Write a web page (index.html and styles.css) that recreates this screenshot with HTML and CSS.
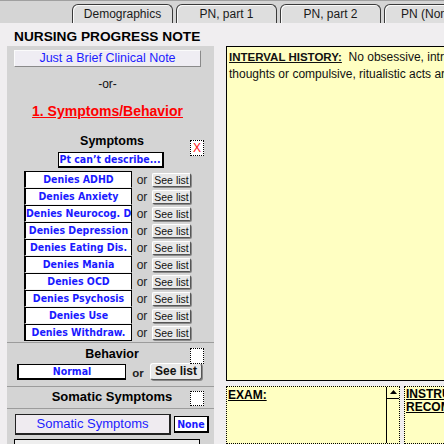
FILE: index.html
```html
<!DOCTYPE html>
<html>
<head>
<meta charset="utf-8">
<link rel="stylesheet" href="styles.css">
</head>
<body>
<div class="topbar">
  <div class="tab">Demographics</div>
  <div class="tab">PN, part 1</div>
  <div class="tab">PN, part 2</div>
  <div class="tab tab-last">PN (Non-Narrative)</div>
</div>
<div class="titlebar">NURSING PROGRESS NOTE</div>
<div class="main">
  <div class="left">
    <div class="brief">Just a Brief Clinical Note</div>
    <div class="or">-or-</div>
    <div class="sec-title">1. Symptoms/Behavior</div>
    <div class="block symptoms">
      <div class="heading">Symptoms</div>
      <div class="xbox">X</div>
      <div class="pt">Pt can’t describe...</div>
      <div class="rows">
        <div class="row"><div class="deny">Denies ADHD</div><span class="or-s">or</span><div class="see">See list</div></div>
        <div class="row"><div class="deny">Denies Anxiety</div><span class="or-s">or</span><div class="see">See list</div></div>
        <div class="row"><div class="deny">Denies Neurocog. Dis</div><span class="or-s">or</span><div class="see">See list</div></div>
        <div class="row"><div class="deny">Denies Depression</div><span class="or-s">or</span><div class="see">See list</div></div>
        <div class="row"><div class="deny">Denies Eating Dis.</div><span class="or-s">or</span><div class="see">See list</div></div>
        <div class="row"><div class="deny">Denies Mania</div><span class="or-s">or</span><div class="see">See list</div></div>
        <div class="row"><div class="deny">Denies OCD</div><span class="or-s">or</span><div class="see">See list</div></div>
        <div class="row"><div class="deny">Denies Psychosis</div><span class="or-s">or</span><div class="see">See list</div></div>
        <div class="row"><div class="deny">Denies Use</div><span class="or-s">or</span><div class="see">See list</div></div>
        <div class="row last"><div class="deny">Denies Withdraw.</div><span class="or-s">or</span><div class="see">See list</div></div>
      </div>
    </div>
    <div class="sep"></div>
    <div class="block behavior">
      <div class="heading">Behavior</div>
      <div class="check"></div>
      <div class="brow">
        <div class="normal">Normal</div>
        <span class="or-b">or</span>
        <div class="see-big">See list</div>
      </div>
    </div>
    <div class="sep sep2"></div>
    <div class="block somatic">
      <div class="heading big">Somatic Symptoms</div>
      <div class="check c2"></div>
    </div>
    <div class="sep sep3"></div>
    <div class="srow">
      <div class="sombtn">Somatic Symptoms</div>
      <div class="none">None</div>
    </div>
    <div class="nextbox"></div>
  </div>
  <div class="right">
    <div class="interval"><span class="lbl">INTERVAL HISTORY:</span>&nbsp; No obsessive, intrusive<br>thoughts or compulsive, ritualistic acts are noted.</div>
    <div class="bottom">
      <div class="exam">
        <div class="exam-text"><span class="lbl">EXAM:</span></div>
        <div class="scroll"><div class="up"><svg width="7" height="4" viewBox="0 0 7 4"><polygon points="0,4 7,4 3.5,0" fill="#000"/></svg></div></div>
      </div>
      <div class="instr"><span class="lbl">INSTRUCTIONS:</span><br><span class="lbl">RECOMMENDATIONS:</span></div>
    </div>
  </div>
</div>
</body>
</html>
```
FILE: styles.css
```css
html, body {
  margin: 0;
  padding: 0;
}
body {
  width: 444px;
  height: 444px;
  overflow: hidden;
  background: #f0eef0;
  font-family: "Liberation Sans", Arial, sans-serif;
  color: #000;
}
.topbar {
  height: 23px;
  box-sizing: border-box;
  background: #d5d5d5;
  border-top: 1px solid #a0a0a0;
  display: flex;
  align-items: flex-end;
  gap: 3px;
  padding-left: 72px;
  white-space: nowrap;
  overflow: hidden;
}
.tab {
  flex-shrink: 0;
  width: 101px;
  height: 19px;
  box-sizing: border-box;
  border: 1px solid #3a3a3a;
  border-bottom: none;
  border-radius: 6px 6px 0 0;
  background: #dedede;
  box-shadow: inset 1px 1px 0 #fafafa;
  font-size: 12px;
  line-height: 18px;
  text-align: center;
  color: #1a1a1a;
  overflow: hidden;
}
.tab-last {
  text-align: left;
  padding-left: 16px;
}
.titlebar {
  height: 23px;
  padding-left: 14px;
  font-weight: bold;
  font-size: 13.7px;
  line-height: 28px;
}
.main {
  display: flex;
  gap: 12px;
  padding-left: 7px;
  height: 398px;
}
.left {
  flex-shrink: 0;
  width: 207px;
  background: #d4d4d4;
  padding-top: 4px;
  box-sizing: border-box;
}
.brief {
  margin-left: 7px;
  width: 187px;
  height: 17px;
  box-sizing: border-box;
  background: #efedf3;
  border: 1px solid;
  border-color: #fbfbfb #8a8a8a #8a8a8a #fbfbfb;
  color: #1c1cff;
  font-size: 12.5px;
  line-height: 15px;
  text-align: center;
}
.or {
  margin-left: 7px;
  width: 187px;
  margin-top: 8px;
  line-height: 18px;
  font-size: 12px;
  text-align: center;
  color: #111;
}
.sec-title {
  margin-left: 7px;
  width: 187px;
  margin-top: 9px;
  line-height: 18px;
  font-size: 14px;
  font-weight: bold;
  color: #ff0000;
  text-decoration: underline;
  text-align: center;
}
.block {
  position: relative;
}
.heading {
  text-align: center;
  font-weight: bold;
  font-size: 12.5px;
  line-height: 16px;
  padding-left: 3px;
}
.symptoms .heading {
  margin-top: 13px;
}
.xbox {
  position: absolute;
  left: 183px;
  top: 7px;
  width: 14px;
  height: 16px;
  box-sizing: border-box;
  border: 1px dotted #000;
  background: #fff;
  color: #ff1010;
  font-size: 12px;
  line-height: 15px;
  text-align: center;
}
.vb {
  font-family: "DejaVu Sans Condensed", "DejaVu Sans", Verdana, sans-serif;
  font-stretch: condensed;
}
.pt, .deny, .normal, .none {
  font-family: "DejaVu Sans Condensed", "DejaVu Sans", Verdana, sans-serif;
  font-stretch: condensed;
  font-weight: bold;
  font-size: 10.5px;
  color: #1a1aff;
  text-align: center;
  white-space: nowrap;
  overflow: hidden;
}
.pt {
  margin: 3px auto 0;
  width: 106px;
  height: 16px;
  box-sizing: border-box;
  background: #fff;
  border: 1px solid #000;
  border-width: 1px 2px 2px 1px;
  line-height: 13px;
}
.rows {
  margin-top: 3px;
}
.row {
  display: flex;
  align-items: center;
  height: 17px;
  padding-left: 17px;
}
.deny {
  width: 108px;
  height: 17px;
  box-sizing: border-box;
  background: #fff;
  border-top: 1px solid #000;
  border-left: 2px solid #000;
  border-right: 1px solid #000;
  border-bottom: 1px solid #f4f4f4;
  line-height: 15px;
}
.row.last .deny {
  border-bottom: 1px solid #000;
}
.or-s {
  width: 20px;
  text-align: center;
  font-size: 12px;
  color: #222;
}
.see {
  width: 39px;
  height: 14px;
  box-sizing: border-box;
  background: #e8e8e8;
  border: 1px solid;
  border-color: #fff #555 #555 #fff;
  border-radius: 2px;
  box-shadow: 1px 1px 0 #8a8a8a;
  font-size: 10.5px;
  line-height: 12px;
  text-align: center;
  color: #111;
  white-space: nowrap;
}
.sep {
  height: 1px;
  background: #9c9c9c;
  margin-top: 1px;
}
.behavior .heading {
  margin-top: 3px;
}
.check {
  position: absolute;
  left: 183px;
  top: 2px;
  width: 14px;
  height: 16px;
  box-sizing: border-box;
  border: 1px dotted #000;
  background: #fff;
}
.brow {
  display: flex;
  align-items: center;
  margin-top: 1px;
  height: 17px;
  padding-left: 10px;
}
.normal {
  width: 109px;
  height: 16px;
  box-sizing: border-box;
  background: #fff;
  border: 1px solid #000;
  border-width: 1px 1px 2px 2px;
  line-height: 13px;
}
.or-b {
  width: 24px;
  text-align: center;
  font-weight: bold;
  font-size: 11.5px;
  color: #222;
  margin-top: 3px;
}
.see-big {
  width: 52px;
  height: 17px;
  box-sizing: border-box;
  background: #e8e8e8;
  border: 1px solid;
  border-color: #fff #555 #555 #fff;
  border-radius: 3px;
  box-shadow: 1px 1px 0 #8a8a8a;
  font-weight: bold;
  font-size: 12px;
  line-height: 14px;
  text-align: center;
  color: #111;
}
.sep2 {
  margin-top: 6px;
}
.somatic .heading {
  margin-top: 2px;
}
.heading.big {
  font-size: 13px;
}
.check.c2 {
  height: 15px;
}
.sep3 {
  margin-top: 3px;
}
.srow {
  display: flex;
  align-items: center;
  margin-top: 5px;
  padding-left: 8px;
  height: 21px;
}
.sombtn {
  width: 156px;
  height: 21px;
  box-sizing: border-box;
  background: #efebf0;
  border: 1px solid #222;
  border-width: 1px 2px 2px 1px;
  color: #1c1cff;
  font-size: 13px;
  line-height: 18px;
  text-align: center;
}
.none {
  margin-left: 3px;
  width: 35px;
  height: 17px;
  box-sizing: border-box;
  background: #fff;
  border: 1px solid #000;
  border-width: 1px 2px 2px 1px;
  line-height: 14px;
}
.nextbox {
  margin-top: 4px;
  margin-left: 7px;
  width: 186px;
  height: 20px;
  box-sizing: border-box;
  border: 1px solid #000;
  background: #eeeeee;
}
.right {
  flex-shrink: 0;
  width: 330px;
  display: flex;
  flex-direction: column;
}
.interval, .exam, .instr {
  background-color: #ffffc2;
  background-image: radial-gradient(circle, rgba(255,255,255,0.9) 0.5px, transparent 0.7px);
  background-size: 4px 4px;
}
.interval {
  width: 330px;
  height: 344px;
  box-sizing: border-box;
  border: 1px solid #000;
  padding: 2px 2px;
  font-size: 12px;
  line-height: 17px;
  color: #111;
  white-space: nowrap;
}
.interval .lbl {
  font-size: 11.5px;
}
.lbl {
  font-weight: bold;
  text-decoration: underline;
}
.bottom {
  display: flex;
  gap: 4px;
  margin-top: 5px;
  height: 60px;
}
.exam {
  width: 174px;
  box-sizing: border-box;
  border: 1px dotted #000;
  display: flex;
}
.exam-text {
  flex: 1;
  padding: 1px 1px;
  font-size: 12px;
  line-height: 15px;
}
.scroll {
  width: 12px;
  border-left: 1px solid #000;
}
.up {
  height: 11px;
  border-bottom: 1px solid #000;
  display: flex;
  align-items: center;
  justify-content: center;
}
.instr {
  width: 120px;
  box-sizing: border-box;
  border: 1px dotted #000;
  padding: 1px 1px;
  font-size: 12px;
  line-height: 13px;
  white-space: nowrap;
}
```
